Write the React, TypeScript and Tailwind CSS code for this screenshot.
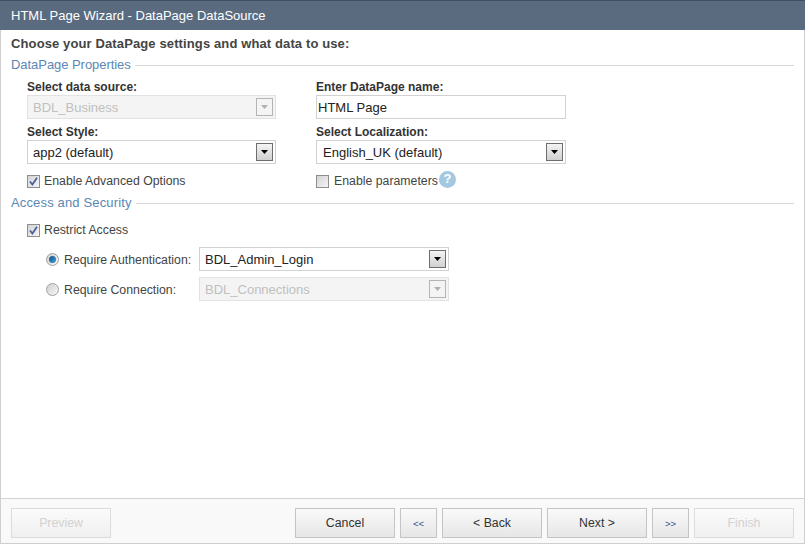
import type { ReactNode } from "react";

const font = "font-['Liberation_Sans',Arial,sans-serif]";

function Arrow({ disabled }: { disabled?: boolean }) {
  return (
    <span
      className={`flex h-[18px] w-[17px] shrink-0 items-center justify-center border ${
        disabled
          ? "border-[#b4b4b4] bg-[#f4f4f4]"
          : "border-[#6e6e6e] bg-gradient-to-b from-[#f4f4f4] to-[#d0d0d0]"
      }`}
    >
      <svg width="7" height="4" viewBox="0 0 7 4">
        <path d="M0 0h7L3.5 4z" fill={disabled ? "#b0b0b0" : "#000"} />
      </svg>
    </span>
  );
}

function Select({ value, disabled, className }: { value: string; disabled?: boolean; className: string }) {
  return (
    <div
      className={`flex h-6 items-center justify-between border pr-[2px] text-[13px] ${className} ${
        disabled ? "border-[#e2e2e2] bg-[#f4f4f4] text-[#c0c0c0]" : "border-[#d2d2d2] bg-white text-[#222]"
      }`}
    >
      <span className="pt-px">{value}</span>
      <Arrow disabled={disabled} />
    </div>
  );
}

function Checkbox({ checked }: { checked?: boolean }) {
  return (
    <span className="flex h-[13px] w-[13px] shrink-0 items-center justify-center border border-[#8e8e8e] bg-gradient-to-br from-[#d4d4d4] to-[#f4f4f4]">
      {checked && (
        <svg width="9" height="9" viewBox="0 0 9 9">
          <path d="M1 4.5l2.4 3L8 .8" fill="none" stroke="#4a5f9c" strokeWidth="1.8" />
        </svg>
      )}
    </span>
  );
}

function Radio({ checked }: { checked?: boolean }) {
  return (
    <span className="flex h-[13px] w-[13px] shrink-0 items-center justify-center rounded-full border border-[#a0a0a0] bg-gradient-to-br from-[#cfcfcf] to-[#f8f8f8]">
      {checked && <span className="h-[7px] w-[7px] rounded-full bg-gradient-to-br from-[#12507f] to-[#3fa0dc]" />}
    </span>
  );
}

function SectionTitle({ children, className }: { children: ReactNode; className: string }) {
  return (
    <div className="flex h-[14px] items-center gap-[4px] text-[13px] leading-[14px] text-[#5b87b4]">
      <span className={className}>{children}</span>
      <span className="h-px flex-1 bg-[#d8d8d8]" />
    </div>
  );
}

function Field({ label, children }: { label: string; children: ReactNode }) {
  return (
    <div className="flex flex-col">
      <label className="h-[15px] text-[12px] font-bold leading-[15px] text-[#333]">{label}</label>
      {children}
    </div>
  );
}

function WizardButton({ label, disabled, small }: { label: string; disabled?: boolean; small?: boolean }) {
  const size = small ? "w-[37px] pt-[3px] text-[9.5px]" : "w-[100px] text-[12.3px]";
  const tone = disabled
    ? "border-[#dcdcdc] from-[#fbfbfb] to-[#f0f0f0] text-[#d2d2d2]"
    : small
      ? "border-[#c4c4c4] from-[#fafafa] to-[#e6e6e6] text-[#2d4f8e]"
      : "border-[#c4c4c4] from-[#fafafa] to-[#e6e6e6] text-[#333]";
  return (
    <button disabled={disabled} className={`h-[30px] border bg-gradient-to-b ${size} ${tone}`}>
      {label}
    </button>
  );
}

export default function App() {
  return (
    <div className={`flex h-[544px] w-[805px] flex-col border-x border-b border-[#cfcfcf] bg-white ${font}`}>
      <div className="-mx-px flex h-[30px] shrink-0 items-center border-t border-[#3f4f63] bg-[#5a6b80] pl-[11px] text-[13px] text-white">
        HTML Page Wizard - DataPage DataSource
      </div>

      <div className="flex-1 pl-[10px] pr-[10px] pt-[6px]">
        <h1 className="h-[15px] text-[13px] font-bold leading-[15px] tracking-[0.12px] text-[#444]">
          Choose your DataPage settings and what data to use:
        </h1>
        <div className="mt-[7px]">
          <SectionTitle className="tracking-[-0.05px]">DataPage Properties</SectionTitle>
        </div>

        <div className="mt-[8px] grid grid-cols-[249px_250px] gap-x-[40px] gap-y-[6px] pl-[16px]">
          <Field label="Select data source:">
            <Select value="BDL_Business" disabled className="w-[249px] pl-[5px]" />
          </Field>
          <Field label="Enter DataPage name:">
            <div className="flex h-6 w-[250px] items-center border border-[#d2d2d2] pl-[1px] pt-px text-[13px] text-[#222]">
              HTML Page
            </div>
          </Field>
          <Field label="Select Style:">
            <Select value="app2 (default)" className="w-[249px] pl-[5px]" />
          </Field>
          <Field label="Select Localization:">
            <Select value="English_UK (default)" className="w-[250px] pl-[6px]" />
          </Field>
          <div className="mt-[3px] flex h-[16px] items-center gap-[4px] text-[12.3px] text-[#444]">
            <Checkbox checked />
            <span>Enable Advanced Options</span>
          </div>
          <div className="mt-[3px] flex h-[16px] items-center text-[12.3px] text-[#444]">
            <Checkbox />
            <span className="ml-[5px]">Enable parameters</span>
            <span className="mb-[4px] ml-px flex h-[17px] w-[17px] items-center justify-center rounded-full bg-[#a3c8df] text-[13px] font-bold text-white">
              ?
            </span>
          </div>
        </div>

        <div className="mt-[7px]">
          <SectionTitle className="tracking-[0.15px]">Access and Security</SectionTitle>
        </div>

        <div className="mt-[12px] pl-[16px]">
          <div className="flex h-[16px] items-center gap-[4px] text-[12.3px] text-[#444]">
            <Checkbox checked />
            <span>Restrict Access</span>
          </div>
          <div className="mt-[9px] flex flex-col gap-[6px] pl-[19px]">
            <div className="flex items-center text-[12.3px] text-[#444]">
              <div className="flex w-[153px] items-center gap-[5px]">
                <Radio checked />
                <span className="pt-[2px]">Require Authentication:</span>
              </div>
              <Select value="BDL_Admin_Login" className="w-[250px] pl-[5px]" />
            </div>
            <div className="flex items-center text-[12.3px] text-[#444]">
              <div className="flex w-[153px] items-center gap-[5px]">
                <Radio />
                <span className="pt-[2px]">Require Connection:</span>
              </div>
              <Select value="BDL_Connections" disabled className="w-[250px] pl-[5px]" />
            </div>
          </div>
        </div>
      </div>

      <div className="flex h-[45px] shrink-0 items-start gap-[5px] border-t border-[#d2d2d2] bg-[#f9f9f9] pl-[10px] pr-[10px] pt-[9px]">
        <WizardButton label="Preview" disabled />
        <div className="flex-1" />
        <WizardButton label="Cancel" />
        <WizardButton label="<<" small />
        <WizardButton label="< Back" />
        <WizardButton label="Next >" />
        <WizardButton label=">>" small />
        <WizardButton label="Finish" disabled />
      </div>
    </div>
  );
}
